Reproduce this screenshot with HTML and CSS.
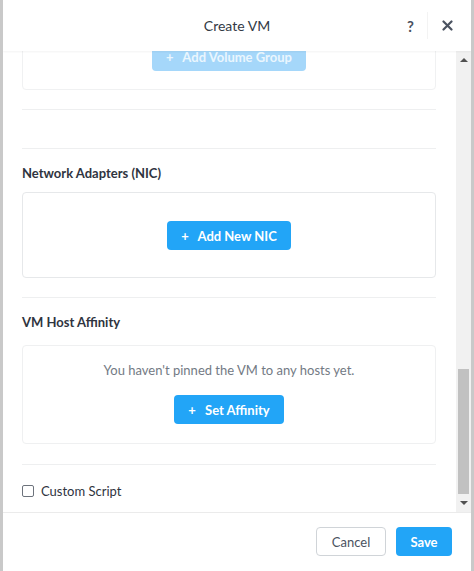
FILE: index.html
```html
<!DOCTYPE html>
<html lang="en">
<head>
    <meta charset="UTF-8">
    <meta name="viewport" content="width=device-width, initial-scale=1.0">
    <title>Create VM</title>
    <link rel="stylesheet" href="styles.css">
</head>
<body>

    <div class="modal">
        <div class="modal-header">
            <span></span>
            <h4 class="modal-title">Create VM</h4>
            <div class="modal-actions">
                <button class="header-btn help-btn">?</button>
                <span class="header-divider"></span>
                <button class="header-btn close-btn">
                    <svg width="11" height="11" viewBox="0 0 11 11">
                        <path d="M1.5 1.5 L9.5 9.5 M9.5 1.5 L1.5 9.5" stroke="#4a5260" stroke-width="2.2" stroke-linecap="round"/>
                    </svg>
                </button>
            </div>
        </div>

        <div class="modal-body">
            <div class="scroll-content">
                <div class="panel panel-volume">
                    <button class="btn btn-primary" disabled><span class="plus">+</span> Add Volume Group</button>
                </div>

                <div class="section section-empty"></div>

                <div class="section">
                    <h5 class="section-title">Network Adapters (NIC)</h5>
                    <div class="panel panel-nic">
                        <button class="btn btn-primary"><span class="plus">+</span> Add New NIC</button>
                    </div>
                </div>

                <div class="section">
                    <h5 class="section-title title-affinity">VM Host Affinity</h5>
                    <div class="panel panel-affinity">
                        <p class="panel-text">You haven't pinned the VM to any hosts yet.</p>
                        <button class="btn btn-primary"><span class="plus">+</span> Set Affinity</button>
                    </div>
                </div>

                <div class="section section-check">
                    <label class="checkbox">
                        <span class="checkbox-box"></span>
                        Custom Script
                    </label>
                </div>
            </div>

            <div class="scrollbar">
                <span class="scroll-arrow arrow-up"></span>
                <div class="scroll-track">
                    <div class="scroll-thumb"></div>
                </div>
                <span class="scroll-arrow arrow-down"></span>
            </div>
        </div>

        <div class="modal-footer">
            <button class="btn btn-default">Cancel</button>
            <button class="btn btn-primary btn-save">Save</button>
        </div>
    </div>

</body>
</html>
```

FILE: styles.css
```css
/* common */
body {
    margin: 0;
    background-color: #c9c9c9;
    font-family: "Lato", "Open Sans", sans-serif;
    color: #2f3440;
}

.modal {
    margin: 0 3px;
    height: 571px;
    background-color: #ffffff;
    display: flex;
    flex-direction: column;
    overflow: hidden;
}

/* header */
.modal-header {
    height: 51px;
    flex-shrink: 0;
    display: grid;
    grid-template-columns: 1fr auto 1fr;
    align-items: center;
    position: relative;
    z-index: 1;
    background-color: #ffffff;
    box-shadow: 0 1px 2px rgba(0, 0, 0, 0.05);
}

.modal-title {
    margin: 0;
    font-size: 14px;
    font-weight: 400;
    color: #333a45;
}

.modal-actions {
    justify-self: end;
    display: flex;
    align-items: center;
    padding-right: 5px;
}

.header-btn {
    border: none;
    background: none;
    padding: 0;
    height: 30px;
    display: flex;
    align-items: center;
    justify-content: center;
    cursor: pointer;
}

.help-btn {
    width: 36px;
    padding-left: 3px;
    font-family: "Lato", sans-serif;
    font-size: 15px;
    font-weight: 700;
    color: #4a5260;
}

.close-btn {
    width: 38px;
}

.header-divider {
    width: 1px;
    height: 27px;
    background-color: #f3f3f3;
}

/* body */
.modal-body {
    flex: 1;
    display: flex;
    min-height: 0;
    border-bottom: 1px solid #ebebeb;
}

.scroll-content {
    flex: 1;
    overflow: hidden;
    padding: 0 20px 0 19px;
}

.panel {
    border: 1px solid #e6e8ea;
    border-radius: 4px;
    display: flex;
    flex-direction: column;
    align-items: center;
}

.panel-volume {
    margin-top: -30px;
    padding: 20px 0 18px;
    border-color: #f0f1f2;
}

.panel-nic {
    padding: 28px 0 27px;
}

.panel-affinity {
    padding: 15px 0 19px;
    border-color: #eff0f1;
}

.panel-text {
    margin: 0 0 16px;
    font-size: 13px;
    line-height: 18px;
    color: #737a84;
}

.section {
    border-top: 1px solid #eeeff0;
    margin-top: 19px;
    padding-top: 16px;
}

.section-empty {
    height: 38px;
    padding-top: 0;
}

.section-empty + .section {
    margin-top: 0;
}

.section-title {
    margin: 0 0 11px;
    font-size: 13px;
    line-height: 16px;
    font-weight: 700;
    color: #2f3440;
}

.section-title.title-affinity {
    margin-bottom: 15px;
}

.section-check {
    margin-top: 20px;
    padding-top: 17px;
}

.checkbox {
    display: flex;
    align-items: center;
    gap: 7px;
    font-size: 13px;
    line-height: 18px;
    color: #2f3440;
}

.checkbox-box {
    width: 10px;
    height: 10px;
    border: 1px solid #6d737c;
    border-radius: 2px;
}

/* buttons */
.btn {
    font-family: "Lato", "Open Sans", sans-serif;
    font-size: 13px;
    height: 29px;
    border-radius: 4px;
    padding: 0 14px;
    cursor: pointer;
}

.btn-primary {
    border: none;
    background-color: #22a5f7;
    color: #ffffff;
    font-weight: 700;
}

.btn-primary[disabled] {
    background-color: #a5d7fa;
    color: #eaf6fe;
}

.btn .plus {
    margin-right: 6px;
    font-weight: 700;
}

.btn-default {
    border: 1px solid #d0d4d8;
    background-color: #ffffff;
    color: #4a5260;
    width: 70px;
    padding: 0;
}

.btn-save {
    width: 56px;
    padding: 0;
}

/* scrollbar */
.scrollbar {
    width: 15px;
    background-color: #f1f1f1;
    display: flex;
    flex-direction: column;
    align-items: center;
}

.scroll-arrow {
    width: 0;
    height: 0;
    border-left: 4px solid transparent;
    border-right: 4px solid transparent;
    margin: 7px 0;
}

.arrow-up {
    border-bottom: 4px solid #505050;
}

.arrow-down {
    border-top: 4px solid #505050;
}

.scroll-track {
    flex: 1;
    width: 100%;
    display: flex;
    flex-direction: column;
    justify-content: flex-end;
    align-items: center;
}

.scroll-thumb {
    width: 11px;
    height: 125px;
    background-color: #c1c1c1;
}

/* footer */
.modal-footer {
    height: 57px;
    flex-shrink: 0;
    display: flex;
    justify-content: flex-end;
    align-items: center;
    gap: 10px;
    padding-right: 19px;
    padding-bottom: 1px;
}
```
